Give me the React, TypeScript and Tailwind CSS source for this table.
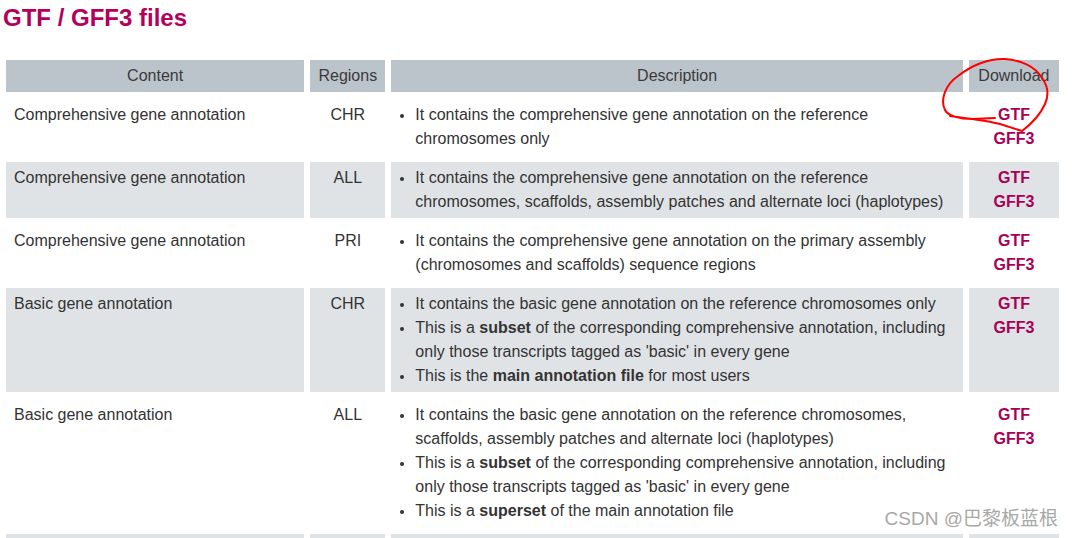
import React from "react";

type Row = {
  content: string;
  region: string;
  desc: React.ReactNode[];
  gray: boolean;
};

const rows: Row[] = [
  {
    content: "Comprehensive gene annotation",
    region: "CHR",
    desc: ["It contains the comprehensive gene annotation on the reference chromosomes only"],
    gray: false,
  },
  {
    content: "Comprehensive gene annotation",
    region: "ALL",
    desc: [
      "It contains the comprehensive gene annotation on the reference chromosomes, scaffolds, assembly patches and alternate loci (haplotypes)",
    ],
    gray: true,
  },
  {
    content: "Comprehensive gene annotation",
    region: "PRI",
    desc: [
      "It contains the comprehensive gene annotation on the primary assembly (chromosomes and scaffolds) sequence regions",
    ],
    gray: false,
  },
  {
    content: "Basic gene annotation",
    region: "CHR",
    desc: [
      "It contains the basic gene annotation on the reference chromosomes only",
      <>
        This is a <b>subset</b> of the corresponding comprehensive annotation, including only those transcripts tagged as 'basic' in every gene
      </>,
      <>
        This is the <b>main annotation file</b> for most users
      </>,
    ],
    gray: true,
  },
  {
    content: "Basic gene annotation",
    region: "ALL",
    desc: [
      "It contains the basic gene annotation on the reference chromosomes, scaffolds, assembly patches and alternate loci (haplotypes)",
      <>
        This is a <b>subset</b> of the corresponding comprehensive annotation, including only those transcripts tagged as 'basic' in every gene
      </>,
      <>
        This is a <b>superset</b> of the main annotation file
      </>,
    ],
    gray: false,
  },
  {
    content: "Comprehensive gene annotation",
    region: "PRI",
    desc: ["It contains the basic gene annotation on the primary assembly"],
    gray: true,
  },
];

export default function App() {
  return (
    <div
      className="relative w-[1073px] h-[538px] overflow-hidden bg-white text-[#333333]"
      style={{ fontFamily: "'Liberation Sans', Arial, sans-serif" }}
    >
      <h2 className="pl-[3px] pt-[4px] text-[24px] leading-[28px] font-bold text-[#b4005a]">
        GTF / GFF3 files
      </h2>
      <table className="mt-[21px] border-separate border-spacing-x-[6px] border-spacing-y-[7px] text-[16px] leading-[24px] table-fixed w-[1065px]">
        <colgroup>
          <col className="w-[298px]" />
          <col className="w-[75px]" />
          <col className="w-[571px]" />
          <col className="w-[90px]" />
        </colgroup>
        <thead>
          <tr className="bg-[#bcc4cb] text-[#3a3a3a]">
            <th className="h-[32px] font-normal text-center py-[4px]">Content</th>
            <th className="font-normal text-center py-[4px]">Regions</th>
            <th className="font-normal text-center py-[4px]">Description</th>
            <th className="font-normal text-center py-[4px]">Download</th>
          </tr>
        </thead>
        <tbody>
          {rows.map((r, i) => (
            <tr key={i} className={r.gray ? "bg-[#e0e3e6]" : ""}>
              <td className="align-top px-[8px] py-[4px]">{r.content}</td>
              <td className="align-top text-center py-[4px]">{r.region}</td>
              <td className="align-top py-[4px] pr-[6px]">
                <ul className="pl-[24px] list-disc marker:text-[13px]">
                  {r.desc.map((d, j) => (
                    <li key={j}>{d}</li>
                  ))}
                </ul>
              </td>
              <td className="align-top text-center py-[4px] font-bold text-[#a80056]">
                <div>GTF</div>
                <div>GFF3</div>
              </td>
            </tr>
          ))}
        </tbody>
      </table>

      <svg
        className="absolute left-0 top-0 pointer-events-none"
        width="1073"
        height="538"
        viewBox="0 0 1073 538"
      >
        <path
          d="M995 118 L972 119 C960 119 948 116 945 110 C940 100 945 85 958 76 C972 65 990 58 1005 59 C1020 60 1035 66 1042 78 C1048 86 1049 95 1045 104 C1040 115 1030 125 1022 131 L1000 124 C985 120 965 118 950 116"
          fill="none"
          stroke="#ff0000"
          strokeWidth="2"
          strokeLinecap="round"
          strokeLinejoin="round"
        />
      </svg>

      <div
        className="absolute right-[15px] top-[505px] text-[19px] leading-[28px] text-[#a8a8a8] bg-white/60"
        style={{ fontFamily: "'Liberation Sans', Arial, 'Noto Sans CJK SC', sans-serif" }}
      >
        CSDN @巴黎板蓝根
      </div>
    </div>
  );
}
